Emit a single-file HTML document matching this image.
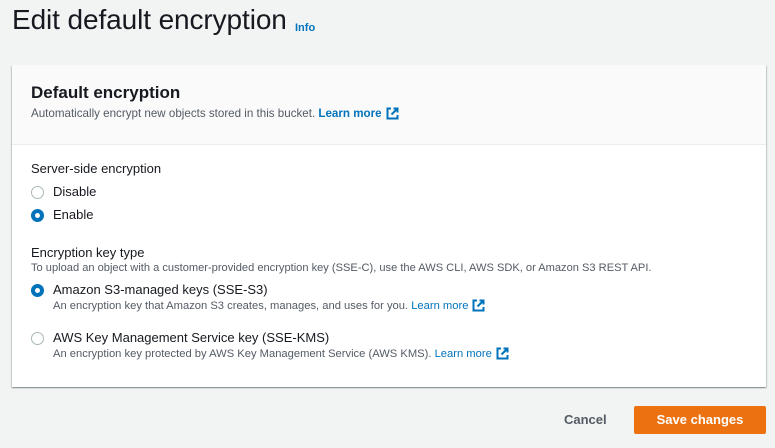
<!DOCTYPE html>
<html><head><style>
*{margin:0;padding:0;box-sizing:border-box}
body{width:775px;height:448px;background:#f2f3f3;font-family:"Liberation Sans",sans-serif;color:#16191f;position:relative;overflow:hidden}
.a{position:absolute;white-space:nowrap}
h1{position:absolute;left:12px;top:4px;font-size:28px;font-weight:400;letter-spacing:-0.1px}
.info{color:#0073bb;font-weight:700;font-size:11px}
.card{position:absolute;left:12px;top:65px;width:754px;height:322px;background:#fff;box-shadow:0 1px 1px rgba(0,28,36,.3),1px 1px 1px rgba(0,28,36,.15),-1px 1px 1px rgba(0,28,36,.15)}
.hd{position:absolute;left:0;top:0;width:754px;height:80px;background:#fafafa;border-bottom:1px solid #eaeded}
.lnk{color:#0073bb}
.sm{font-size:11px;color:#545b64}
.lb{font-size:13px}
.r{position:absolute;width:13px;height:13px;border-radius:50%;border:1px solid #aab7b8;background:#fff}
.r.on{border:4px solid #0073bb}
svg{vertical-align:-3px;margin-left:4px}
.btn{position:absolute;left:634px;top:406px;width:132px;height:28px;background:#ec7211;color:#fff;font-weight:700;font-size:13px;text-align:center;line-height:28px;border-radius:2px}
</style></head><body>
<h1>Edit default encryption</h1>
<div class="a info" style="left:295px;top:22px">Info</div>
<div class="card">
<div class="hd"></div>
<div class="a" style="left:19px;top:18px;font-size:17px;font-weight:700">Default encryption</div>
<div class="a sm" style="left:19px;top:42px;font-size:11.6px">Automatically encrypt new objects stored in this bucket. <b class="lnk">Learn more</b><svg width="13" height="13" viewBox="0 0 13 13"><path d="M5 1.5H1.5v10h10V8M7.5 1.5h4v4M11.5 1.5 5.5 7.5" fill="none" stroke="#0073bb" stroke-width="2"/></svg></div>
<div class="a lb" style="left:19px;top:96px">Server-side encryption</div>
<div class="r" style="left:19px;top:121px"></div><div class="a lb" style="left:41px;top:119px">Disable</div>
<div class="r on" style="left:19px;top:144px"></div><div class="a lb" style="left:41px;top:142px">Enable</div>
<div class="a lb" style="left:19px;top:180px">Encryption key type</div>
<div class="a sm" style="left:19px;top:197px;font-size:11.1px">To upload an object with a customer-provided encryption key (SSE-C), use the AWS CLI, AWS SDK, or Amazon S3 REST API.</div>
<div class="r on" style="left:19px;top:219px"></div><div class="a lb" style="left:41px;top:217px">Amazon S3-managed keys (SSE-S3)</div>
<div class="a sm" style="left:41px;top:234px;font-size:11.2px">An encryption key that Amazon S3 creates, manages, and uses for you. <span class="lnk">Learn more</span><svg width="13" height="13" viewBox="0 0 13 13"><path d="M5 1.5H1.5v10h10V8M7.5 1.5h4v4M11.5 1.5 5.5 7.5" fill="none" stroke="#0073bb" stroke-width="2"/></svg></div>
<div class="r" style="left:19px;top:267px"></div><div class="a lb" style="left:41px;top:265px">AWS Key Management Service key (SSE-KMS)</div>
<div class="a sm" style="left:41px;top:282px;font-size:11.2px">An encryption key protected by AWS Key Management Service (AWS KMS). <span class="lnk">Learn more</span><svg width="13" height="13" viewBox="0 0 13 13"><path d="M5 1.5H1.5v10h10V8M7.5 1.5h4v4M11.5 1.5 5.5 7.5" fill="none" stroke="#0073bb" stroke-width="2"/></svg></div>
</div>
<div class="a" style="left:564px;top:412px;font-size:13px;font-weight:700;color:#545b64">Cancel</div>
<div class="btn">Save changes</div>
</body></html>
